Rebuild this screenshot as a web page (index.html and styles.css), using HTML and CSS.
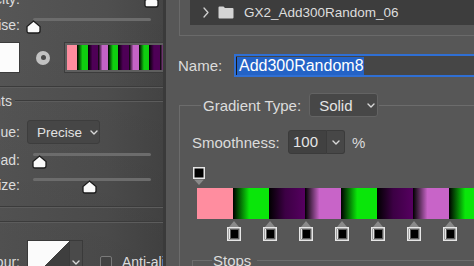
FILE: index.html
```html
<!DOCTYPE html>
<html>
<head>
<meta charset="utf-8">
<link rel="stylesheet" href="styles.css">
</head>
<body>
<div class="screen">
  <aside class="lp">
    <div class="lp-in">
      <div class="row">
        <div class="lbl">Opacity:</div>
        <div class="slider"><div class="track"></div>
          <svg class="thumb" style="left:124px" viewBox="0 0 15 14"><path d="M7.5 1 L14 6.5 V11 Q14 13 12 13 H3 Q1 13 1 11 V6.5 Z"/></svg>
        </div>
      </div>
      <div class="row r-noise">
        <div class="lbl">Noise:</div>
        <div class="slider"><div class="track"></div>
          <svg class="thumb" style="left:6px" viewBox="0 0 15 14"><path d="M7.5 1 L14 6.5 V11 Q14 13 12 13 H3 Q1 13 1 11 V6.5 Z"/></svg>
        </div>
      </div>
      <div class="row-sw">
        <div class="sw-cell"><div class="swatch"></div></div>
        <div class="radio"><div class="dot"></div></div>
        <div class="gprev">
          <div class="ps pink"></div>
          <div class="ps g-green"></div><div class="ps g-purple"></div><div class="ps g-orchid"></div>
          <div class="ps g-green"></div><div class="ps g-purple"></div><div class="ps g-orchid"></div>
          <div class="ps g-green"></div><div class="ps g-purple"></div><div class="ps g-orchid"></div>
        </div>
      </div>
      <div class="sep s1"></div>
      <div class="hd">
        <div class="hd-t">Elements</div>
        <div class="hd-line"></div>
      </div>
      <div class="row r-tech">
        <div class="lbl">Technique:</div>
        <div class="dd">
          <span>Precise</span>
          <svg class="chev" viewBox="0 0 8 5"><polyline points="1,1 4,4 7,1"/></svg>
        </div>
      </div>
      <div class="row r-spread">
        <div class="lbl">Spread:</div>
        <div class="slider"><div class="track"></div>
          <svg class="thumb" style="left:12.5px" viewBox="0 0 15 14"><path d="M7.5 1 L14 6.5 V11 Q14 13 12 13 H3 Q1 13 1 11 V6.5 Z"/></svg>
        </div>
      </div>
      <div class="row r-size">
        <div class="lbl">Size:</div>
        <div class="slider"><div class="track"></div>
          <svg class="thumb" style="left:62.5px" viewBox="0 0 15 14"><path d="M7.5 1 L14 6.5 V11 Q14 13 12 13 H3 Q1 13 1 11 V6.5 Z"/></svg>
        </div>
      </div>
      <div class="sep s2"></div>
      <div class="sep s3"></div>
      <div class="row r-contour">
        <div class="lbl">Contour:</div>
        <div class="cbox"></div>
        <div class="cdd">
          <svg class="chev" viewBox="0 0 8 5"><polyline points="1,1 4,4 7,1"/></svg>
        </div>
        <div class="chk"></div>
        <div class="chk-lbl">Anti-aliased</div>
      </div>
    </div>
  </aside>
  <div class="divider"></div>
  <main class="dlg">
    <div class="list-outer">
      <div class="list-in">
        <svg class="lchev" viewBox="0 0 6 11"><polyline points="1,1 5,5.5 1,10"/></svg>
        <svg class="folder" viewBox="0 0 16 13"><path d="M0.5 1.5 Q0.5 0.5 1.5 0.5 H5.5 L7 2 H14.5 Q15.5 2 15.5 3 V11.5 Q15.5 12.5 14.5 12.5 H1.5 Q0.5 12.5 0.5 11.5 Z"/></svg>
        <span class="ltext">GX2_Add300Random_06</span>
      </div>
    </div>
    <div class="name-row">
      <div class="name-lbl">Name:</div>
      <div class="name-in"><span class="sel">Add300Random8</span></div>
    </div>
    <div class="grp">
      <div class="grp-head">
        <div class="seg"></div>
        <div class="gt-lbl">Gradient Type:</div>
        <div class="dd2">
          <span>Solid</span>
          <svg class="chev" viewBox="0 0 8 5"><polyline points="1,1 4,4 7,1"/></svg>
        </div>
        <div class="seg-end"></div>
      </div>
      <div class="grp-body">
        <div class="sm-row">
          <div class="sm-lbl">Smoothness:</div>
          <div class="num">100</div>
          <div class="num-dd"><svg class="chev" viewBox="0 0 8 5"><polyline points="1,1 4,4 7,1"/></svg></div>
          <div class="pct">%</div>
        </div>
        <svg class="ostop" viewBox="0 0 12 18"><rect x="0.75" y="0.75" width="10.5" height="10.5" fill="#000" stroke="#e6e6e6" stroke-width="1.5"/><polygon points="1,12.5 11,12.5 6,18" fill="#8a8a8a"/></svg>
        <div class="bar">
          <div class="bs pink"></div>
          <div class="bs b-green"></div><div class="bs b-purple"></div><div class="bs b-orchid"></div>
          <div class="bs b-green"></div><div class="bs b-purple"></div><div class="bs b-orchid"></div>
          <div class="bs b-green"></div>
        </div>
        <div class="cstops">
          <svg class="cstop" viewBox="0 0 14 21"><polygon points="2,7 12,7 7,1" fill="#8a8a8a"/><rect x="0.75" y="7.75" width="12.5" height="12.5" fill="#5a5a5a" stroke="#e6e6e6" stroke-width="1.5"/><rect x="4" y="10" width="7" height="8" fill="#000"/><line x1="2.5" y1="9" x2="2.5" y2="19" stroke="#e6e6e6"/></svg>
          <svg class="cstop" viewBox="0 0 14 21"><polygon points="2,7 12,7 7,1" fill="#8a8a8a"/><rect x="0.75" y="7.75" width="12.5" height="12.5" fill="#5a5a5a" stroke="#e6e6e6" stroke-width="1.5"/><rect x="4" y="10" width="7" height="8" fill="#000"/><line x1="2.5" y1="9" x2="2.5" y2="19" stroke="#e6e6e6"/></svg>
          <svg class="cstop" viewBox="0 0 14 21"><polygon points="2,7 12,7 7,1" fill="#8a8a8a"/><rect x="0.75" y="7.75" width="12.5" height="12.5" fill="#5a5a5a" stroke="#e6e6e6" stroke-width="1.5"/><rect x="4" y="10" width="7" height="8" fill="#000"/><line x1="2.5" y1="9" x2="2.5" y2="19" stroke="#e6e6e6"/></svg>
          <svg class="cstop" viewBox="0 0 14 21"><polygon points="2,7 12,7 7,1" fill="#8a8a8a"/><rect x="0.75" y="7.75" width="12.5" height="12.5" fill="#5a5a5a" stroke="#e6e6e6" stroke-width="1.5"/><rect x="4" y="10" width="7" height="8" fill="#000"/><line x1="2.5" y1="9" x2="2.5" y2="19" stroke="#e6e6e6"/></svg>
          <svg class="cstop" viewBox="0 0 14 21"><polygon points="2,7 12,7 7,1" fill="#8a8a8a"/><rect x="0.75" y="7.75" width="12.5" height="12.5" fill="#5a5a5a" stroke="#e6e6e6" stroke-width="1.5"/><rect x="4" y="10" width="7" height="8" fill="#000"/><line x1="2.5" y1="9" x2="2.5" y2="19" stroke="#e6e6e6"/></svg>
          <svg class="cstop" viewBox="0 0 14 21"><polygon points="2,7 12,7 7,1" fill="#8a8a8a"/><rect x="0.75" y="7.75" width="12.5" height="12.5" fill="#5a5a5a" stroke="#e6e6e6" stroke-width="1.5"/><rect x="4" y="10" width="7" height="8" fill="#000"/><line x1="2.5" y1="9" x2="2.5" y2="19" stroke="#e6e6e6"/></svg>
          <svg class="cstop" viewBox="0 0 14 21"><polygon points="2,7 12,7 7,1" fill="#8a8a8a"/><rect x="0.75" y="7.75" width="12.5" height="12.5" fill="#5a5a5a" stroke="#e6e6e6" stroke-width="1.5"/><rect x="4" y="10" width="7" height="8" fill="#000"/><line x1="2.5" y1="9" x2="2.5" y2="19" stroke="#e6e6e6"/></svg>
        </div>
        <div class="stops-head">
          <div class="sseg"></div>
          <div class="st-lbl">Stops</div>
          <div class="sseg-end"></div>
        </div>
      </div>
    </div>
  </main>
</div>
</body>
</html>
```

FILE: styles.css
```css
* { box-sizing: border-box; margin: 0; padding: 0; }
html, body { width: 474px; height: 266px; overflow: hidden; }
body {
  background: #575757;
  font-family: "Liberation Sans", Arial, sans-serif;
  color: #dcdcdc;
}
.screen { display: flex; height: 266px; }

/* ---------- left panel ---------- */
.lp {
  width: 163px; flex: none; overflow: hidden; height: 266px;
  background:
    linear-gradient(180deg, rgba(0,0,0,0) 0%, rgba(0,0,0,0.08) 100%),
    linear-gradient(90deg, #565656 0%, #4f4f4f 65%, #454545 100%);
}
.lp-in { margin-left: -60px; margin-top: -13px; width: 240px; display: flex; flex-direction: column; }
.row { display: flex; align-items: center; height: 24px; flex: none; }
.lbl { width: 80px; flex: none; text-align: right; font-size: 14px; white-space: nowrap; }
.slider { position: relative; width: 136px; height: 24px; margin-left: 7px; flex: none; }
.track { position: absolute; left: 6px; top: 5px; width: 118px; height: 3px; border-radius: 2px; background: #6c6c6c; }
.thumb { position: absolute; top: 7px; width: 15px; height: 14px; margin-left: -7.5px; }
.thumb path { fill: #fafafa; stroke: #1c1c1c; stroke-width: 1.3; }
.r-noise { margin-top: 2px; }

.row-sw { display: flex; align-items: center; height: 31px; margin-top: 5px; flex: none; }
.sw-cell { width: 80px; flex: none; display: flex; justify-content: flex-end; }
.swatch { width: 32px; height: 31px; background: #fcfcfc; border: 1px solid #3c3c3c; }
.radio { margin-left: 16px; width: 14px; height: 14px; border-radius: 50%; background: #c2c2c2; display: flex; align-items: center; justify-content: center; flex: none; }
.dot { width: 5px; height: 5px; border-radius: 50%; background: #4a4a4a; }
.gprev { margin-left: 14px; width: 110px; height: 31px; border: 1px solid #3c3c3c; background: #5e5e5e; padding: 2px; display: flex; flex: none; }
.ps { width: 10.3px; height: 100%; flex: none; }
.pink { background: #ff8d9f; }
.g-green { background: linear-gradient(90deg, #000 0%, #0fcf0f 50%, #0fcf0f 100%); }
.g-purple { background: linear-gradient(90deg, #000 0%, #4e0056 45%, #4e0056 100%); }
.g-orchid { background: linear-gradient(90deg, #000 0%, #c462c6 45%, #c462c6 100%); }

.sep { height: 2px; flex: none; border-top: 1px solid #3b3b3b; border-bottom: 1px solid #5c5c5c; }
.s1 { margin-top: 13px; }
.s2 { margin-top: 9px; }
.s3 { margin-top: 13px; }
.hd { display: flex; align-items: center; height: 16px; margin-top: 5px; flex: none; }
.hd-t { width: 72px; text-align: right; font-size: 14px; white-space: nowrap; }
.hd-line { flex: 1; margin-left: 3px; height: 2px; border-top: 1px solid #3b3b3b; border-bottom: 1px solid #5c5c5c; }

.r-tech { margin-top: 11px; }
.dd {
  margin-left: 7px; width: 73px; height: 24px; flex: none;
  background: #464646; border: 1px solid #3d3d3d; border-radius: 3px;
  display: flex; align-items: center; padding-left: 9px;
  font-size: 13.5px; color: #e2e2e2;
}
.dd .chev { margin-left: 8px; }
.chev { width: 8px; height: 5px; flex: none; }
.chev polyline { fill: none; stroke: #d8d8d8; stroke-width: 1.4; stroke-linecap: round; stroke-linejoin: round; }
.r-spread { margin-top: 4px; }
.r-size { margin-top: 1px; }

.r-contour { margin-top: 17px; height: 44px; }
.cbox {
  margin-left: 7px; width: 43px; height: 44px; flex: none;
  border: 1px solid #3a3a3a;
  background: linear-gradient(to bottom right, #fbfbfb 50%, #3e3e3e 50%);
}
.cdd {
  width: 13px; height: 44px; flex: none; background: #4a4a4a;
  border: 1px solid #3a3a3a; border-left: none;
  display: flex; align-items: center; justify-content: center;
}
.chk { margin-left: 17px; width: 12px; height: 12px; flex: none; border: 1px solid #7a7a7a; border-radius: 2px; background: #424242; }
.chk-lbl { margin-left: 10px; font-size: 14px; white-space: nowrap; }

.divider { width: 3px; flex: none; background: #3a3a3a; }

/* ---------- dialog ---------- */
.dlg { flex: 1; min-width: 0; overflow: hidden; display: flex; flex-direction: column; background: #575757; }
.list-outer { margin-left: 13px; border-left: 1px solid #6a6a6a; border-bottom: 1px solid #6a6a6a; padding: 0 0 10px 10px; flex: none; }
.list-in { height: 25px; background: #3d3d3d; display: flex; align-items: center; padding-left: 13px; font-size: 13.5px; color: #dedede; }
.lchev { width: 6px; height: 11px; flex: none; }
.lchev polyline { fill: none; stroke: #cfcfcf; stroke-width: 1.3; stroke-linecap: round; stroke-linejoin: round; }
.folder { width: 16px; height: 13px; margin-left: 9px; flex: none; }
.folder path { fill: #d4d4d4; }
.ltext { margin-left: 10px; white-space: nowrap; }

.name-row { display: flex; align-items: center; height: 23px; margin-top: 18px; flex: none; }
.name-lbl { margin-left: 12px; width: 44px; font-size: 15px; flex: none; }
.name-in {
  margin-left: 12px; width: 260px; height: 23px; flex: none;
  border: 2px solid #2f6fd4; background: #464646;
  display: flex; align-items: center;
}
.sel { background: #2463c6; color: #fff; font-size: 16px; height: 18px; line-height: 18px; padding-left: 2px; border-left: 1px solid #1a1a1a; white-space: nowrap; }

.grp { margin-left: 13px; margin-top: 16px; flex: 1; display: flex; flex-direction: column; }
.grp-head { display: flex; align-items: center; height: 24px; flex: none; }
.seg { align-self: flex-end; width: 22px; height: 12px; border-left: 1px solid #6c6c6c; border-top: 1px solid #6c6c6c; flex: none; }
.gt-lbl { margin-left: 2px; font-size: 15px; white-space: nowrap; }
.dd2 {
  margin-left: 8px; width: 69px; height: 24px; flex: none;
  background: #474747; border: 1px solid #636363; border-radius: 3px;
  display: flex; align-items: center; padding-left: 9px;
  font-size: 15px; color: #e4e4e4;
}
.dd2 .chev { margin-left: 15px; }
.seg-end { flex: 1; align-self: flex-end; height: 12px; border-top: 1px solid #6c6c6c; margin-left: 1px; }
.grp-body { flex: 1; border-left: 1px solid #6c6c6c; padding-left: 12px; display: flex; flex-direction: column; }

.sm-row { display: flex; align-items: center; height: 24px; margin-top: 13px; flex: none; }
.sm-lbl { font-size: 15px; width: 88px; white-space: nowrap; }
.num { margin-left: 8px; width: 39px; height: 24px; background: #414141; border: 1px solid #3b3b3b; border-radius: 3px 0 0 3px; padding-left: 4px; font-size: 15px; line-height: 22px; color: #e6e6e6; flex: none; }
.num-dd { width: 18px; height: 24px; background: #474747; border: 1px solid #3b3b3b; border-left: none; border-radius: 0 3px 3px 0; display: flex; align-items: center; justify-content: center; flex: none; }
.pct { margin-left: 7px; font-size: 15px; }

.ostop { width: 12px; height: 18px; margin-top: 13px; margin-left: 1px; flex: none; display: block; }
.bar { margin-top: 3px; margin-left: 5px; height: 31px; display: flex; flex: none; width: 300px; }
.bs { width: 36px; height: 31px; flex: none; }
.b-green { background: linear-gradient(90deg, #000 0%, #0ae60a 45%, #0ae60a 100%); }
.b-purple { background: linear-gradient(90deg, #000 0%, #3c0044 45%, #560060 100%); }
.b-orchid { background: linear-gradient(90deg, #000 0%, #c864c8 40%, #c864c8 100%); }
.cstops { margin-top: 1px; margin-left: 35px; height: 21px; display: flex; gap: 22px; flex: none; }
.cstop { width: 14px; height: 21px; flex: none; display: block; }

.stops-head { display: flex; align-items: center; height: 20px; margin-top: 9px; flex: none; }
.sseg { align-self: flex-end; width: 20px; height: 10px; border-left: 1px solid #6c6c6c; border-top: 1px solid #6c6c6c; flex: none; }
.st-lbl { margin-left: 1px; font-size: 15px; }
.sseg-end { flex: 1; align-self: flex-end; height: 10px; border-top: 1px solid #6c6c6c; margin-left: 6px; }
```
